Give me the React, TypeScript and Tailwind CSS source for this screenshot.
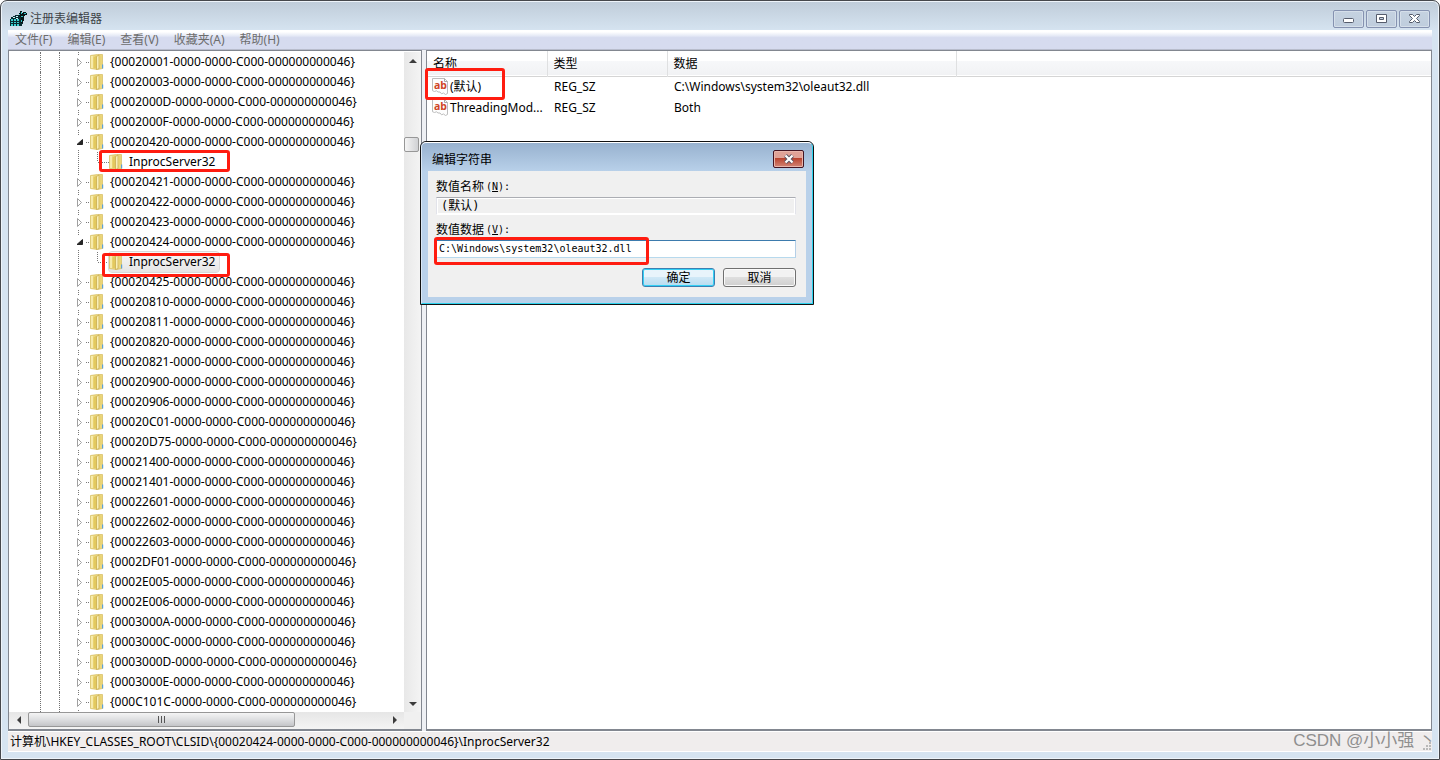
import React from "react";

interface KeyNode {
  id: string;
  open?: boolean;
  child?: string;
  selected?: boolean;
}

const keys: KeyNode[] = [
  { id: "00020001" },
  { id: "00020003" },
  { id: "0002000D" },
  { id: "0002000F" },
  { id: "00020420", open: true, child: "InprocServer32" },
  { id: "00020421" },
  { id: "00020422" },
  { id: "00020423" },
  { id: "00020424", open: true, child: "InprocServer32", selected: true },
  { id: "00020425" },
  { id: "00020810" },
  { id: "00020811" },
  { id: "00020820" },
  { id: "00020821" },
  { id: "00020900" },
  { id: "00020906" },
  { id: "00020C01" },
  { id: "00020D75" },
  { id: "00021400" },
  { id: "00021401" },
  { id: "00022601" },
  { id: "00022602" },
  { id: "00022603" },
  { id: "0002DF01" },
  { id: "0002E005" },
  { id: "0002E006" },
  { id: "0003000A" },
  { id: "0003000C" },
  { id: "0003000D" },
  { id: "0003000E" },
  { id: "000C101C" },
];

const values = [
  { name: "(默认)", type: "REG_SZ", data: "C:\\Windows\\system32\\oleaut32.dll", marked: true },
  { name: "ThreadingMod...", type: "REG_SZ", data: "Both", marked: false },
];

const menus = ["文件(F)", "编辑(E)", "查看(V)", "收藏夹(A)", "帮助(H)"];

const RegeditIcon = () => (
  <svg width="17" height="17" viewBox="0 0 17 17" shapeRendering="crispEdges">
    <path d="M0 9h1V7h2V6h2V5h4V3h2v2h2v1h1v5h-1v3h-1v2H0z" fill="#0a2a30" />
    <path d="M1 9h2v2H1zM4 9h2v2H4zM7 9h2v2H7zM1 12h2v1H1zM4 12h2v1H4zM7 12h2v1H7zM1 14h2v2H1zM4 14h2v2H4zM7 14h2v2H7z" fill="#3ccfd2" />
    <path d="M3 7h2v1H3zM6 6h2v1H6zM6 8h2v1H6z" fill="#c8fbfb" />
    <path d="M9 6V3h1V1h2v2h1V2h3v1h1v2h-2v1h-1v5h-1v2h-2V8z" fill="#061214" />
    <path d="M11 2h1v2h-1zM14 3h2v1h-2zM11 6h2v1h-2zM9 4h1v1H9zM11 10h1v2h-1z" fill="#35c3c6" />
  </svg>
);

const FolderIcon = () => (
  <svg className="shrink-0" width="14" height="16" viewBox="0 0 14 16">
    <path d="M.5 1.500 7.500.500h5v14l-5 1-7-1z" fill="#ecd880" stroke="#d9c26a" strokeWidth=".8" />
    <path d="M1 2h2v12H1z" fill="#f7ebaa" />
    <path d="m3.500 3.500 3-2v13l-3-.600z" fill="#e3c95e" />
    <path d="M6.500 2.500 9 1v13.500l-2.500 1z" fill="#f9f0b8" stroke="#c3a548" strokeWidth=".7" />
    <path d="M9.500 1.500h2V11h-2z" fill="#e9d374" />
    <path d="M12 10.500h1.200v4H12z" fill="#5b9fd6" />
  </svg>
);

const StringIcon = () => (
  <svg className="shrink-0" width="16" height="17" viewBox="0 0 16 17">
    <path d="M.5.5h12l3 3v12l-2 1-2-1.5-2 .8-1.5-1.8h-2l-1.5-1.2-2 .7-2-.8z" fill="#fdfdfd" stroke="#bdbdbd" />
    <path d="M12.5.5v3h3" fill="none" stroke="#aaa" />
    <text x="2" y="10.5" fontSize="10.5" fontWeight="700" fill="#cf4526" fontFamily="Noto Sans, sans-serif">
      ab
    </text>
  </svg>
);

const Expander = ({ open }: { open?: boolean }) => (
  <button aria-label={open ? "折叠" : "展开"} className="shrink-0">
    <svg width="14" height="20" viewBox="0 0 14 20">
      <path d="M2.5 0v3M2.5 18v2" stroke="#777" strokeDasharray="1 1" />
      {open ? (
        <path d="M6.5 7.500v5H1z" fill="#262626" stroke="#262626" />
      ) : (
        <path d="M1.5 6.5v8l4-4z" fill="#fff" stroke="#a0a0a0" />
      )}
      <path d="M10 10.5h4" stroke="#777" strokeDasharray="1 1" />
    </svg>
  </button>
);

const Guides = () => (
  <>
    <span className="w-[19px] shrink-0 border-l border-dotted border-[#707070]" />
    <span className="w-[17px] shrink-0 border-l border-dotted border-[#707070]" />
  </>
);

const Arrow = ({ d, label, className }: { d: string; label: string; className: string }) => (
  <button aria-label={label} className={`flex items-center justify-center shrink-0 ${className}`}>
    <svg width="8" height="8" viewBox="0 0 8 8">
      <path d={d} fill="#3c3c3c" />
    </svg>
  </button>
);

const Marker = ({ className }: { className: string }) => (
  <span className={`absolute z-10 border-3 border-[#ff1c10] rounded-[3px] pointer-events-none ${className}`} />
);

const TreeRow = ({ node }: { node: KeyNode }) => (
  <li>
    <div className="flex h-5 pl-[31px]">
      <Guides />
      <Expander open={node.open} />
      <div className="flex items-center gap-[6px]">
        <FolderIcon />
        <span>{`{${node.id}-0000-0000-C000-000000000046}`}</span>
      </div>
    </div>
    {node.child && (
      <div className="relative flex h-5 pl-[31px]">
        <Guides />
        <svg className="shrink-0" width="33" height="20" viewBox="0 0 33 20">
          <path d="M2.5 0v20M21.500 0v10M22 10.500h11" fill="none" stroke="#777" strokeDasharray="1 1" />
        </svg>
        <div
          className={
            node.selected
              ? "flex items-center gap-[6px] pr-1 rounded-[3px] bg-linear-to-b from-[#f8f8f8] to-[#e5e5e5] outline outline-[#d9d9d9]"
              : "flex items-center gap-[6px]"
          }
        >
          <FolderIcon />
          <span>{node.child}</span>
        </div>
        <Marker className={node.selected ? "left-[93px] top-[1px] w-32 h-6" : "left-[90px] -top-[2px] w-[131px] h-[22px]"} />
      </div>
    )}
  </li>
);

const TreePane = () => (
  <div className="flex flex-col w-[414px] shrink-0 bg-white border border-b-2 border-[#828790]">
    <div className="flex flex-1 min-h-0 pt-px">
      <ul className="flex-1 overflow-hidden whitespace-nowrap">
        {keys.map((k) => (
          <TreeRow key={k.id} node={k} />
        ))}
      </ul>
      <div className="flex flex-col w-[17px] bg-linear-to-r from-[#e8e8e8] to-[#f4f4f4]">
        <Arrow label="向上滚动" className="h-[17px]" d="M4 2l4 4H0z" />
        <div className="flex-1 pt-[68px] pr-[2px]">
          <div className="h-[15px] border border-[#979797] rounded-[2px] bg-linear-to-r from-[#f5f5f5] to-[#d0d1d4]" />
        </div>
        <Arrow label="向下滚动" className="h-[17px]" d="M4 6l4-4H0z" />
      </div>
    </div>
    <div className="flex h-[17px] bg-[#f0f0f0]">
      <div className="flex flex-1 bg-linear-to-b from-[#e6e6e6] to-[#f4f4f4]">
        <Arrow label="向左滚动" className="w-[19px] pb-[2px]" d="M2 4l4-4v8z" />
        <div className="flex-1 pb-[2px]">
          <div className="flex items-center justify-center gap-[2px] w-[267px] h-[15px] border border-[#979797] rounded-[2px] bg-linear-to-b from-[#f5f5f5] via-[#dedfe1] to-[#c4c5c8]">
            <i className="w-px h-[7px] bg-[#555]" />
            <i className="w-px h-[7px] bg-[#555]" />
            <i className="w-px h-[7px] bg-[#555]" />
          </div>
        </div>
        <Arrow label="向右滚动" className="w-[19px] pb-[2px]" d="M6 4L2 0v8z" />
      </div>
      <div className="w-[17px]" />
    </div>
  </div>
);

const ValuePane = () => (
  <div className="flex-1 bg-white border border-b-2 border-[#828790]">
    <table className="w-full table-fixed text-left whitespace-nowrap">
      <colgroup>
        <col className="w-[120px]" />
        <col className="w-[120px]" />
        <col className="w-[289px]" />
        <col />
      </colgroup>
      <thead>
        <tr className="h-[25px] bg-linear-to-b from-white from-40% via-[#f7f8fa] via-40% to-[#f1f2f4] border-b border-[#d5d5d5]">
          {["名称", "类型", "数据"].map((h, i) => (
            <th key={h} className="font-normal border-r border-[#dfe0e1] pt-[1px] pl-[6px]">
              {h}
            </th>
          ))}
          <td />
        </tr>
      </thead>
      <tbody>
        {values.map((v) => (
          <tr key={v.name} className="h-[21px]">
            <td className="relative pl-[5px]">
              <div className="flex items-center gap-[2px]">
                <StringIcon />
                {v.name}
              </div>
              {v.marked && <Marker className="-left-[2px] -top-[9px] w-20 h-8" />}
            </td>
            <td className="pl-[7px]">{v.type}</td>
            <td className="pl-[7px]">{v.data}</td>
            <td />
          </tr>
        ))}
      </tbody>
    </table>
  </div>
);

const EditDialog = () => (
  <div
    role="dialog"
    aria-labelledby="dialog-title"
    className="absolute z-20 left-[420px] top-[141px] w-[394px] border border-[#111] rounded-t-[6px] bg-[#b9d1ea] overflow-hidden"
  >
    <div className="border border-t-white border-l-[#d9e7f5] border-r-[#2bd3ee] border-b-[#2bd3ee] rounded-t-[5px] px-[6px] pb-[6px] bg-linear-to-b from-[#98b2cf] to-[#b9d1ea] to-18%">
      <div className="flex items-center justify-between h-7 pl-1 pr-[2px]">
        <h2 id="dialog-title" className="pt-[6px]">编辑字符串</h2>
        <button
          aria-label="关闭"
          className="flex items-center justify-center w-[31px] h-[18px] mt-1 border border-[#431422] rounded-[2px] bg-linear-to-b from-[#e0a297] from-45% via-[#b8412c] via-45% to-[#d28475] shadow-[inset_0_0_0_1px_#e8b5ab]"
        >
          <svg width="12" height="10" viewBox="0 0 12 10">
            <path d="M2.500 1.500l7 7M9.500 1.500l-7 7" stroke="#5b5462" strokeWidth="4" />
            <path d="M2.500 1.500l7 7M9.500 1.500l-7 7" stroke="#fff" strokeWidth="2.200" />
          </svg>
        </button>
      </div>
      <form
        className="flex flex-col h-[126px] pt-2 pl-2 pr-[10px] bg-[#f0f0f0] font-['DejaVu_Sans_Mono','Noto_Sans_CJK_SC',monospace] text-[12px]"
        onSubmit={(e) => e.preventDefault()}
      >
        <label htmlFor="value-name" className="flex items-center h-4">
          数值名称<span className="pl-[2px] text-[10px]">(<u>N</u>):</span>
        </label>
        <input
          id="value-name"
          readOnly
          value="(默认)"
          className="h-[18px] mt-[2px] px-1 border border-t-[#abadb3] border-x-[#e2e3ea] border-b-white bg-[#f0f0f0] shadow-[inset_0_0_0_1px_#fff] outline-none"
        />
        <label htmlFor="value-data" className="flex items-center h-4 mt-[7px]">
          数值数据<span className="pl-[2px] text-[10px]">(<u>V</u>):</span>
        </label>
        <div className="relative flex mt-[2px]">
          <input
            id="value-data"
            defaultValue={"C:\\Windows\\system32\\oleaut32.dll"}
            className="flex-1 h-[18px] px-[2px] text-[10px] border border-t-[#3d7bad] border-x-[#b5cfe7] border-b-[#b7d9ed] bg-white outline-none"
          />
          <Marker className="-left-[2px] -top-[3px] w-[215px] h-7" />
        </div>
        <div className="flex justify-end gap-2 mt-[10px]">
          <button className="w-[73px] h-[19px] leading-4 border border-[#3c7fb1] rounded-[3px] bg-linear-to-b from-[#e8f4fb] from-50% via-[#cfe8f6] via-50% to-[#b7dcf0] shadow-[inset_0_0_0_1px_#33d0f5]">
            确定
          </button>
          <button className="w-[73px] h-[19px] leading-4 border border-[#707070] rounded-[3px] bg-linear-to-b from-[#f2f2f2] from-50% via-[#dedede] via-50% to-[#cfcfcf] shadow-[inset_0_0_0_1px_#fafafa]">
            取消
          </button>
        </div>
      </form>
    </div>
  </div>
);

const CaptionButton = ({ label, children }: { label: string; children: React.ReactNode }) => (
  <button
    aria-label={label}
    className="flex items-center justify-center w-[31px] h-[18px] border border-[#8592b0] rounded-[2px] bg-linear-to-b from-[#c5d2e0] to-[#bfcddd] shadow-[inset_0_0_0_1px_#d5dfea]"
  >
    <svg width="13" height="11" viewBox="0 0 13 11">
      {children}
    </svg>
  </button>
);

const TitleBar = () => (
  <header className="flex items-center justify-between h-7 pl-[2px] pr-[2px] shrink-0">
    <div className="flex items-center gap-[3px] pt-[5px] text-[#404448]">
      <RegeditIcon />
      <h1>注册表编辑器</h1>
    </div>
    <div className="flex gap-[2px] pt-[5px]">
      <CaptionButton label="最小化">
        <rect x="1.500" y="5.500" width="10" height="4" rx="1" fill="#fff" stroke="#555c6c" />
      </CaptionButton>
      <CaptionButton label="最大化">
        <path d="M1.500 1.500h10v8h-10zM4.500 4.500v2h4v-2z" fill="#fff" fillRule="evenodd" stroke="#555c6c" />
      </CaptionButton>
      <CaptionButton label="关闭">
        <path d="M1.500 1.500h3l2 2 2-2h3v1l-3 3 3 3v1h-3l-2-2-2 2h-3v-1l3-3-3-3z" fill="#fff" stroke="#555c6c" />
      </CaptionButton>
    </div>
  </header>
);

export default function App() {
  return (
    <div className="relative h-screen min-w-[820px] overflow-hidden bg-white text-black text-[12px] leading-5 font-['Noto_Sans','Noto_Sans_CJK_SC',sans-serif]">
      <div className="flex flex-col h-full px-[6px] pb-[7px] border border-[#46484c] rounded-t-[7px] bg-linear-to-b from-[#bfccd9] to-[#d6e4f1] to-[30px] shadow-[inset_0_0_0_1px_#eef4fa]">
        <div className="flex flex-col flex-1 min-h-0 px-px pt-px">
          <TitleBar />
          <nav className="flex gap-[15px] h-5 pl-[7px] shrink-0 bg-linear-to-b from-white from-10% via-[#e6eaf6] via-30% to-[#d6dbef] to-40% border-b border-[#b8bccc]">
            {menus.map((m) => (
              <button key={m} className="text-[#6d6d6d]">
                {m}
              </button>
            ))}
          </nav>
          <main className="flex flex-1 min-h-0 gap-1 bg-[#eef0f4]">
            <TreePane />
            <ValuePane />
          </main>
          <footer className="flex justify-between h-[21px] shrink-0 pl-[2px] bg-[#f0eded] border-y border-white">
            <span>计算机\HKEY_CLASSES_ROOT\CLSID\{"{00020424-0000-0000-C000-000000000046}"}\InprocServer32</span>
            <div className="flex items-end">
              <span className="text-[17px] leading-5 text-[#8f8f8f] font-['Liberation_Sans','Noto_Sans_CJK_SC',sans-serif]">
                CSDN @小小强 丶
              </span>
              <svg className="-ml-[14px]" width="10" height="10" viewBox="0 0 10 10">
                <path d="M7 1h2v2H7zM4 4h2v2H4zM7 4h2v2H7zM1 7h2v2H1zM4 7h2v2H4zM7 7h2v2H7z" fill="#b9b9b9" />
              </svg>
            </div>
          </footer>
        </div>
      </div>
      <EditDialog />
    </div>
  );
}
